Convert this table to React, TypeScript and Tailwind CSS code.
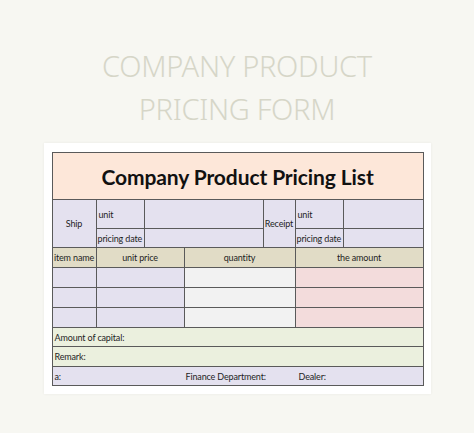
import React from 'react';

const cell = 'border border-[#5a5a5a] px-[2px] text-[9px] tracking-[-0.15px] leading-none text-[#1e1e1e]';

function DataRow() {
    return (
        <tr className="h-[20px]">
            <td className={`${cell} bg-[#e4e1ef]`} />
            <td colSpan={2} className={`${cell} bg-[#e4e1ef]`} />
            <td colSpan={2} className={`${cell} bg-[#f2f2f2]`} />
            <td colSpan={2} className={`${cell} bg-[#f3dcdc]`} />
        </tr>
    );
}

export default function App() {
    return (
        <div
            className="w-[474px] h-[433px] bg-[#f7f7f2] flex flex-col items-center overflow-hidden"
            style={{ fontFamily: 'Lato, "Noto Sans", sans-serif' }}
        >
            {/* Page heading */}
            <div
                className="mt-[44px] text-center text-[29px] leading-[43px] font-light text-[#d6d6c8] tracking-[-0.3px]"
                style={{ fontFamily: '"Noto Sans", sans-serif' }}
            >
                <div>COMPANY PRODUCT</div>
                <div>PRICING FORM</div>
            </div>

            {/* Sheet */}
            <div className="mt-[13px] w-[387px] bg-white pt-[9px] pl-[8px] pr-[8px] pb-[8px] shadow-[0_0_3px_rgba(0,0,0,0.06)]">
                <table className="table-fixed border-collapse w-[371px] border-[1.5px] border-[#444]">
                    <colgroup>
                        <col className="w-[44px]" />
                        <col className="w-[48px]" />
                        <col className="w-[40px]" />
                        <col className="w-[79px]" />
                        <col className="w-[32px]" />
                        <col className="w-[48px]" />
                        <col className="w-[80px]" />
                    </colgroup>
                    <tbody>
                        <tr className="h-[47px]">
                            <td colSpan={7} className="border border-[#5a5a5a] bg-[#fde7d9] text-center text-[21px] font-bold text-[#111] leading-none tracking-[-0.1px]">
                                Company Product Pricing List
                            </td>
                        </tr>
                        <tr className="h-[29px]">
                            <td rowSpan={2} className={`${cell} bg-[#e4e1ef] text-center`}>Ship</td>
                            <td className={`${cell} bg-[#e4e1ef]`}>unit</td>
                            <td colSpan={2} className={`${cell} bg-[#e4e1ef]`} />
                            <td rowSpan={2} className={`${cell} bg-[#e4e1ef] text-center !px-0`}>Receipt</td>
                            <td className={`${cell} bg-[#e4e1ef]`}>unit</td>
                            <td className={`${cell} bg-[#e4e1ef]`} />
                        </tr>
                        <tr className="h-[19px]">
                            <td className={`${cell} bg-[#e4e1ef] whitespace-nowrap !px-[1px]`}>pricing date</td>
                            <td colSpan={2} className={`${cell} bg-[#e4e1ef]`} />
                            <td className={`${cell} bg-[#e4e1ef] whitespace-nowrap !px-[1px]`}>pricing date</td>
                            <td className={`${cell} bg-[#e4e1ef]`} />
                        </tr>
                        <tr className="h-[20px] text-center">
                            <td className={`${cell} bg-[#e1dcc6] whitespace-nowrap !px-0`}>item name</td>
                            <td colSpan={2} className={`${cell} bg-[#e1dcc6]`}>unit price</td>
                            <td colSpan={2} className={`${cell} bg-[#e1dcc6]`}>quantity</td>
                            <td colSpan={2} className={`${cell} bg-[#e1dcc6]`}>the amount</td>
                        </tr>
                        <DataRow />
                        <DataRow />
                        <DataRow />
                        <tr className="h-[19px]">
                            <td colSpan={7} className={`${cell} bg-[#ebf0de]`}>Amount of capital:</td>
                        </tr>
                        <tr className="h-[20px]">
                            <td colSpan={7} className={`${cell} bg-[#ebf0de]`}>Remark:</td>
                        </tr>
                        <tr className="h-[19px]">
                            <td colSpan={7} className={`${cell} bg-[#e4e1ef] !px-0`}>
                                <div className="flex">
                                    <span className="w-[132px] pl-[2px]">a:</span>
                                    <span className="w-[112px] pl-[1px]">Finance Department:</span>
                                    <span className="pl-[2px]">Dealer:</span>
                                </div>
                            </td>
                        </tr>
                    </tbody>
                </table>
            </div>
        </div>
    );
}
